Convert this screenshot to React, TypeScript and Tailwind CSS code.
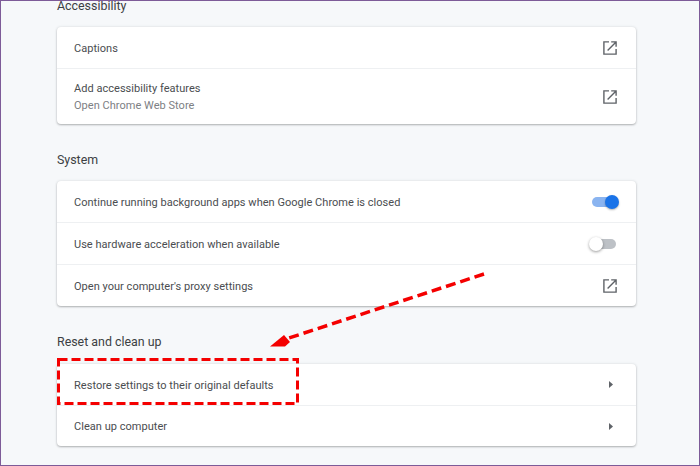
const ExternalIcon = () => (
  <svg width="14" height="14" viewBox="0 0 14 14" fill="none" stroke="#5f6368" strokeWidth="1.4">
    <path d="M6 .9H.9v12.2h12.2V8" />
    <path d="M4.6 9.4 12.8 1.2M8.2.9h4.9v4.9" />
  </svg>
);

const Caret = () => (
  <svg width="4" height="7" viewBox="0 0 4 7" fill="#5f6368">
    <path d="M0 0l4 3.5L0 7z" />
  </svg>
);

function Row({ label, sub, right, h }: { label: string; sub?: string; right?: React.ReactNode; h: string }) {
  return (
    <div className={`flex items-center justify-between border-t border-[#eef0f2] pl-[17px] first:border-t-0 ${h}`}>
      <div className="pt-px">
        <div className="text-[11px] leading-[17px] tracking-[0.03px] text-[#4a4d50]">{label}</div>
        {sub && <div className="text-[11px] leading-[17px] tracking-[0.03px] text-[#7d8084]">{sub}</div>}
      </div>
      {right}
    </div>
  );
}

const Card = ({ children }: { children: React.ReactNode }) => (
  <div className="rounded bg-white shadow-[0_1px_2px_rgba(60,64,67,0.35),0_0_3px_rgba(60,64,67,0.12)]">{children}</div>
);

const Heading = ({ children, className }: { children: string; className: string }) => (
  <h2 className={`text-[12.4px] leading-[18px] text-[#3c4043] ${className}`}>{children}</h2>
);

export default function App() {
  const ext = (
    <span className="mr-[19px] flex">
      <ExternalIcon />
    </span>
  );
  const caret = (
    <span className="mr-[23px] flex">
      <Caret />
    </span>
  );

  return (
    <div className="relative h-[466px] w-[700px] overflow-hidden border border-[#7d5b98] bg-[#f6f8fa] font-['Roboto',sans-serif]">
      <div className="ml-[56px] mr-[63px]">
        <h2 className="-mt-px text-[12.4px] leading-[11px] text-[#3c4043]">Accessibility</h2>
        <div className="mt-[16px]">
          <Card>
            <Row label="Captions" h="h-[41px]" right={ext} />
            <Row label="Add accessibility features" sub="Open Chrome Web Store" h="h-[56px]" right={ext} />
          </Card>
        </div>

        <Heading className="mt-[27px]">System</Heading>
        <div className="mt-[12px]">
          <Card>
            <Row
              label="Continue running background apps when Google Chrome is closed"
              h="h-[41px]"
              right={
                <span className="relative mr-[18px] h-[10px] w-[26px] rounded-full bg-[#8ab4f0]">
                  <span className="absolute -top-[2px] -right-px h-[14px] w-[14px] rounded-full bg-[#1a73e8] shadow-[0_1px_2px_rgba(0,0,0,0.3)]" />
                </span>
              }
            />
            <Row
              label="Use hardware acceleration when available"
              h="h-[42px]"
              right={
                <span className="relative mr-[20px] h-[10px] w-[26px] rounded-full bg-[#bdc1c6]">
                  <span className="absolute -top-[2px] -left-px h-[14px] w-[14px] rounded-full bg-white shadow-[0_1px_3px_rgba(0,0,0,0.4)]" />
                </span>
              }
            />
            <Row label="Open your computer's proxy settings" h="h-[42px]" right={ext} />
          </Card>
        </div>

        <Heading className="mt-[27px]">Reset and clean up</Heading>
        <div className="mt-[13px]">
          <Card>
            <Row label="Restore settings to their original defaults" h="h-[41px]" right={caret} />
            <Row label="Clean up computer" h="h-[41px]" right={caret} />
          </Card>
        </div>
      </div>

      {/* annotation over the screenshot */}
      <svg className="absolute -left-px -top-px" width="700" height="466" fill="none" stroke="#f40000" strokeWidth="3">
        <rect x="58.5" y="359.5" width="239" height="44" strokeDasharray="9 4" />
        <path d="M484 274 286 339" strokeWidth="3.5" strokeDasharray="10 5" />
        <path d="M270 346.5 284 335l6 7-5 4.5z" fill="#f40000" stroke="none" />
      </svg>
    </div>
  );
}
